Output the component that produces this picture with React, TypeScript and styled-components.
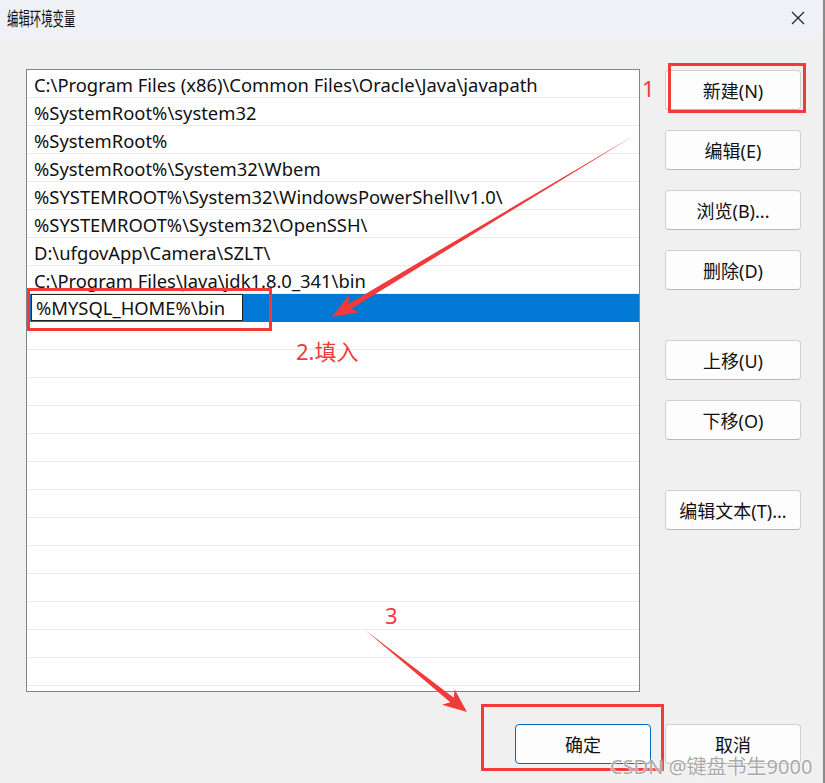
import React from "react";
import styled, { createGlobalStyle } from "styled-components";

const GlobalStyle = createGlobalStyle`
  html, body {
    margin: 0;
    padding: 0;
    background: #f0f0f0;
  }
  body {
    font-family: "Noto Sans", "Noto Sans CJK SC", sans-serif;
  }
`;

const RED = "#f23a3a";

const Window = styled.div`
  position: relative;
  width: 825px;
  height: 783px;
  background: #f0f0f0;
  overflow: hidden;
  display: flex;
  flex-direction: column;
  border-right: 2px solid #8a8a8a;
  box-sizing: border-box;
`;

const TitleBar = styled.div`
  height: 39px;
  flex: none;
  background: #eef2f7;
  display: flex;
  align-items: center;
  justify-content: space-between;
  padding: 0 18px 0 7px;
`;

const Title = styled.span`
  font-family: "Noto Sans CJK SC", sans-serif;
  font-size: 19px;
  color: #111;
  display: inline-block;
  transform: scaleX(0.6);
  transform-origin: left center;
  margin-top: -4px;
`;

const CloseBtn = styled.div`
  width: 14px;
  height: 14px;
  margin-top: -4px;
  display: flex;
`;

const Body = styled.div`
  flex: 1;
  display: flex;
  flex-direction: column;
  padding: 30px 22px 0 26px;
`;

const TopRow = styled.div`
  display: flex;
  gap: 25px;
`;

const ListBox = styled.div`
  width: 614px;
  height: 623px;
  box-sizing: border-box;
  border: 1px solid #7f858c;
  background: #fff;
  overflow: hidden;
`;

const Row = styled.div<{ $selected?: boolean }>`
  height: 28px;
  box-sizing: border-box;
  border-bottom: 1px solid ${(p) => (p.$selected ? "#0078d4" : "#ebebeb")};
  background: ${(p) => (p.$selected ? "#0078d4" : "#fff")};
  display: flex;
  align-items: center;
  padding-left: ${(p) => (p.$selected ? "4px" : "7px")};
  padding-top: 1px;
  font-family: "Noto Sans", sans-serif;
  font-size: 18.4px;
  color: #111;
  white-space: nowrap;
`;

const EditBox = styled.div`
  width: 212px;
  height: 27px;
  box-sizing: border-box;
  border: 1px solid #222;
  background: #fff;
  display: flex;
  align-items: center;
  padding-left: 4px;
  margin-top: -1px;
`;

const SideColumn = styled.div`
  display: flex;
  flex-direction: column;
  padding-top: 1px;
`;

const Button = styled.div<{ $gap?: number; $primary?: boolean }>`
  width: 136px;
  height: 40px;
  box-sizing: border-box;
  margin-top: ${(p) => p.$gap ?? 0}px;
  border: 1px solid ${(p) => (p.$primary ? "#0067c0" : "#d0d0d0")};
  border-bottom-color: ${(p) => (p.$primary ? "#0067c0" : "#b8b8b8")};
  border-radius: 4px;
  background: #fdfdfd;
  display: flex;
  align-items: center;
  justify-content: center;
  font-family: "Noto Sans", "Noto Sans CJK SC", sans-serif;
  font-size: 18px;
  color: #111;
`;

const Footer = styled.div`
  display: flex;
  justify-content: flex-end;
  gap: 14px;
  margin-top: 32px;
`;

const Overlay = styled.div`
  position: absolute;
  inset: 0;
  pointer-events: none;
`;

const RedBox = styled.div<{ $x: number; $y: number; $w: number; $h: number }>`
  position: absolute;
  left: ${(p) => p.$x}px;
  top: ${(p) => p.$y}px;
  width: ${(p) => p.$w}px;
  height: ${(p) => p.$h}px;
  box-sizing: border-box;
  border: 3px solid ${RED};
`;

const Note = styled.span<{ $x: number; $y: number }>`
  position: absolute;
  left: ${(p) => p.$x}px;
  top: ${(p) => p.$y}px;
  color: ${RED};
  font-family: "Noto Sans", "Noto Sans CJK SC", sans-serif;
  font-size: 22px;
  line-height: 1;
`;

const Watermark = styled.span`
  position: absolute;
  left: 610px;
  top: 751px;
  font-family: "Noto Sans", "Noto Sans CJK SC", sans-serif;
  font-size: 20px;
  color: rgba(140, 140, 140, 0.75);
  text-shadow: 0 0 2px #fff, 0 0 2px #fff;
  white-space: nowrap;
`;

const paths = [
  "C:\\Program Files (x86)\\Common Files\\Oracle\\Java\\javapath",
  "%SystemRoot%\\system32",
  "%SystemRoot%",
  "%SystemRoot%\\System32\\Wbem",
  "%SYSTEMROOT%\\System32\\WindowsPowerShell\\v1.0\\",
  "%SYSTEMROOT%\\System32\\OpenSSH\\",
  "D:\\ufgovApp\\Camera\\SZLT\\",
  "C:\\Program Files\\Java\\jdk1.8.0_341\\bin",
];

// builds a tapered arrow polygon from tail to tip
function arrowPoints(tx: number, ty: number, hx: number, hy: number, headLen: number, headHalf: number, shaft: number) {
  const dx = hx - tx;
  const dy = hy - ty;
  const len = Math.hypot(dx, dy);
  const ux = dx / len;
  const uy = dy / len;
  const nx = -uy;
  const ny = ux;
  const bx = hx - ux * headLen;
  const by = hy - uy * headLen;
  const ix = hx - ux * headLen * 0.8;
  const iy = hy - uy * headLen * 0.8;
  const pts = [
    [tx, ty],
    [ix + nx * shaft, iy + ny * shaft],
    [bx + nx * headHalf, by + ny * headHalf],
    [hx, hy],
    [bx - nx * headHalf, by - ny * headHalf],
    [ix - nx * shaft, iy - ny * shaft],
  ];
  return pts.map((p) => p.map((v) => v.toFixed(1)).join(",")).join(" ");
}

export default function App() {
  const emptyRows = Array.from({ length: 14 });
  return (
    <>
      <GlobalStyle />
      <Window>
        <TitleBar>
          <Title>编辑环境变量</Title>
          <CloseBtn>
            <svg width="14" height="14" viewBox="0 0 14 14">
              <path d="M1 1 L13 13 M13 1 L1 13" stroke="#222" strokeWidth="1.2" />
            </svg>
          </CloseBtn>
        </TitleBar>
        <Body>
          <TopRow>
            <ListBox>
              {paths.map((p) => (
                <Row key={p}>{p}</Row>
              ))}
              <Row $selected>
                <EditBox>%MYSQL_HOME%\bin</EditBox>
              </Row>
              {emptyRows.map((_, i) => (
                <Row key={i} />
              ))}
            </ListBox>
            <SideColumn>
              <Button>新建(N)</Button>
              <Button $gap={20}>编辑(E)</Button>
              <Button $gap={20}>浏览(B)...</Button>
              <Button $gap={20}>删除(D)</Button>
              <Button $gap={50}>上移(U)</Button>
              <Button $gap={20}>下移(O)</Button>
              <Button $gap={50}>编辑文本(T)...</Button>
            </SideColumn>
          </TopRow>
          <Footer>
            <Button $primary>确定</Button>
            <Button>取消</Button>
          </Footer>
        </Body>
        <Overlay>
          <RedBox $x={668} $y={63} $w={138} $h={50} />
          <RedBox $x={27} $y={288} $w={245} $h={43} />
          <RedBox $x={481} $y={704} $w={183} $h={67} />
          <Note $x={642} $y={77}>1</Note>
          <Note $x={296} $y={340}>2.填入</Note>
          <Note $x={385} $y={604}>3</Note>
          <svg width="825" height="783" style={{ position: "absolute", left: 0, top: 0 }}>
            <polygon points={arrowPoints(635, 135, 332, 317, 26, 10, 2.8)} fill={RED} />
            <polygon points={arrowPoints(365, 630, 467, 712, 24, 10, 2.8)} fill={RED} />
          </svg>
          <Watermark>CSDN @键盘书生9000</Watermark>
        </Overlay>
      </Window>
    </>
  );
}
